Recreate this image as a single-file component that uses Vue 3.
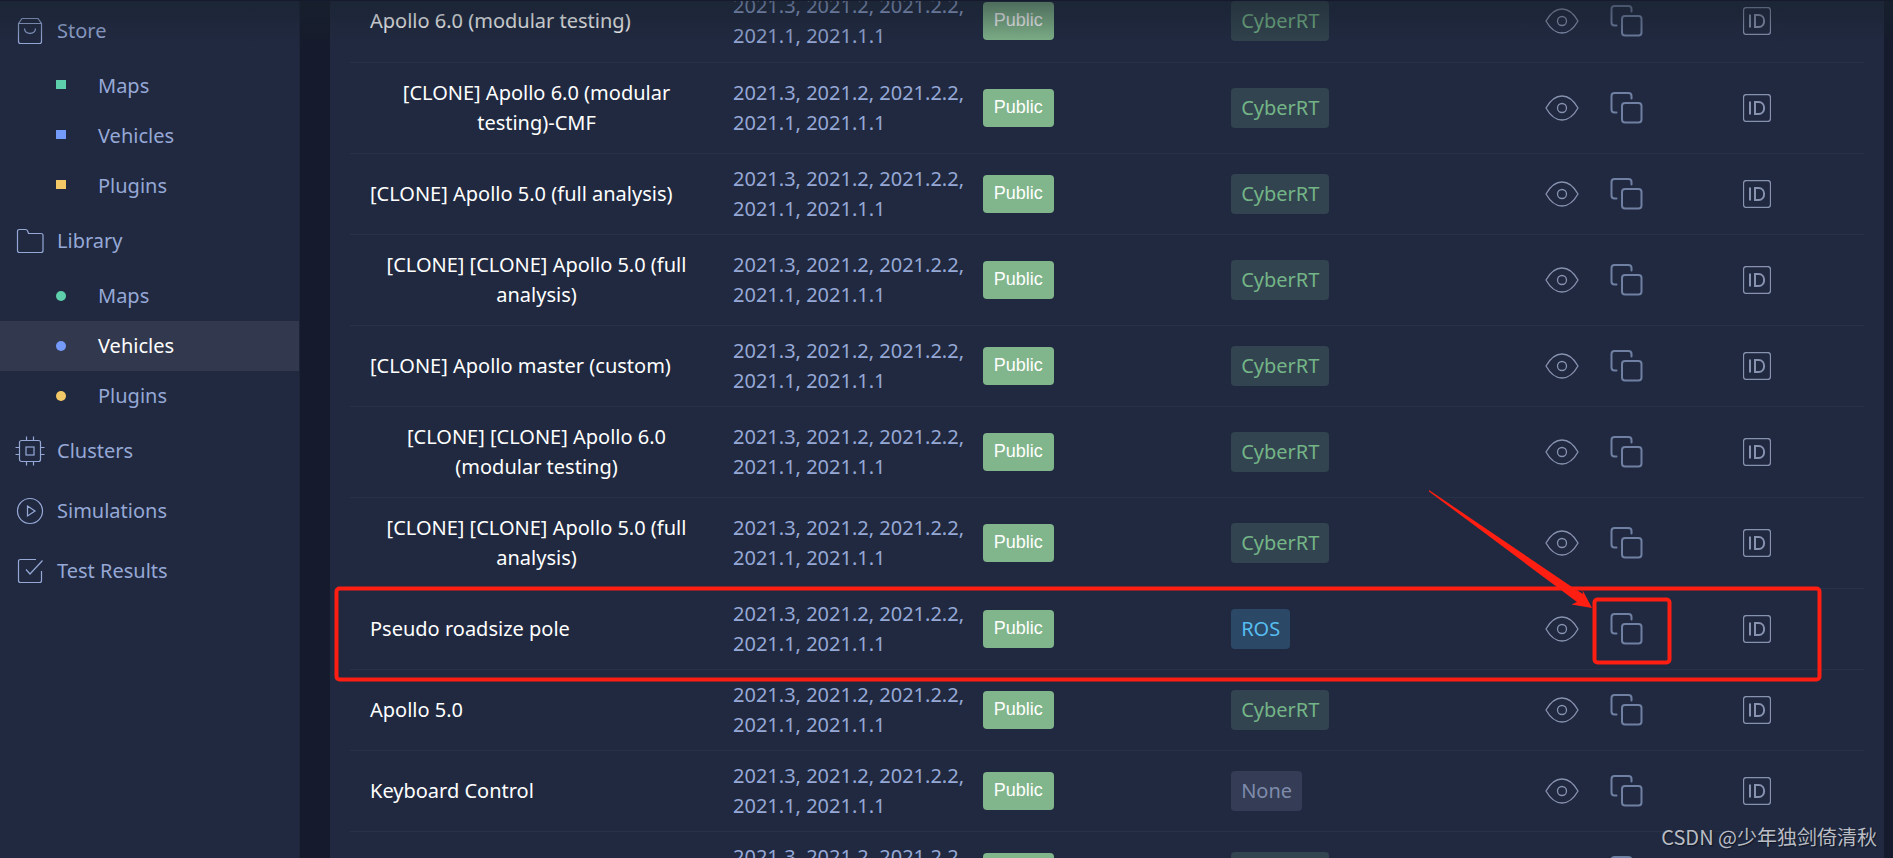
<script setup>
const navigation = [
  {
    label: 'Store', icon: 'store', shape: 'square',
    items: [
      { label: 'Maps', tone: 'green' },
      { label: 'Vehicles', tone: 'blue' },
      { label: 'Plugins', tone: 'yellow' },
    ],
  },
  {
    label: 'Library', icon: 'folder', shape: 'circle',
    items: [
      { label: 'Maps', tone: 'green' },
      { label: 'Vehicles', tone: 'blue', active: true },
      { label: 'Plugins', tone: 'yellow' },
    ],
  },
  { label: 'Clusters', icon: 'chip', items: [] },
  { label: 'Simulations', icon: 'play', items: [] },
  { label: 'Test Results', icon: 'check', items: [] },
]

const versions = '2021.3, 2021.2, 2021.2.2, 2021.1, 2021.1.1'

const vehicles = [
  { name: 'Apollo 6.0 (modular testing)', bridge: 'CyberRT' },
  { name: '[CLONE] Apollo 6.0 (modular testing)-CMF', bridge: 'CyberRT' },
  { name: '[CLONE] Apollo 5.0 (full analysis)', bridge: 'CyberRT' },
  { name: '[CLONE] [CLONE] Apollo 5.0 (full analysis)', bridge: 'CyberRT' },
  { name: '[CLONE] Apollo master (custom)', bridge: 'CyberRT' },
  { name: '[CLONE] [CLONE] Apollo 6.0 (modular testing)', bridge: 'CyberRT' },
  { name: '[CLONE] [CLONE] Apollo 5.0 (full analysis)', bridge: 'CyberRT' },
  { name: 'Pseudo roadsize pole', bridge: 'ROS' },
  { name: 'Apollo 5.0', bridge: 'CyberRT' },
  { name: 'Keyboard Control', bridge: 'None' },
  { name: '', bridge: 'CyberRT' },
]
</script>

<template>
  <div class="page">
    <nav class="sidebar" aria-label="Main">
      <template v-for="group in navigation" :key="group.label">
        <a class="nav-head" href="#">
          <svg class="nav-icon" viewBox="0 0 30 30" aria-hidden="true">
            <template v-if="group.icon === 'store'">
              <path d="M3.5 7.500L7 2.500H23L26.500 7.500V25.500Q26.500 27.500 24.500 27.500H5.500Q3.500 27.500 3.500 25.500ZM3.500 7.500H26.500M9.500 12.500C10 19 20 19 20.500 12.500" />
            </template>
            <template v-else-if="group.icon === 'folder'">
              <path d="M2.500 5.500Q2.500 3.500 4.500 3.500H10.500Q12 3.500 12.600 5L13.500 7.500H26Q28 7.500 28 9.500V24.500Q28 26.500 26 26.500H4.500Q2.500 26.500 2.500 24.500Z" />
            </template>
            <template v-else-if="group.icon === 'chip'">
              <rect x="4.500" y="4.500" width="21" height="21" rx="2" />
              <rect x="11" y="11" width="8" height="8" />
              <path d="M11.500 .5V4.500M18.500 .5V4.500M11.500 25.500V29.500M18.500 25.500V29.500M.5 11.500H4.500M.5 18.500H4.500M25.500 11.500H29.500M25.500 18.500H29.500" />
            </template>
            <template v-else-if="group.icon === 'play'">
              <circle cx="15" cy="15" r="12.500" />
              <path d="M12.500 10L20 15L12.500 20Z" />
            </template>
            <template v-else>
              <path d="M21 3.500H5.500Q3.500 3.500 3.500 5.500V24.500Q3.500 26.500 5.500 26.500H24.500Q26.500 26.500 26.500 24.500V15M11 13.500L15 18L27.500 4.500" />
            </template>
          </svg>
          {{ group.label }}
        </a>
        <a
          v-for="item in group.items"
          :key="item.label"
          class="nav-item"
          :class="{ active: item.active }"
          href="#"
        >
          <svg class="dot" :class="item.tone" viewBox="0 0 10 12" aria-hidden="true">
            <rect v-if="group.shape === 'square'" width="10" height="9" />
            <circle v-else cx="5" cy="6" r="5" />
          </svg>
          {{ item.label }}
        </a>
      </template>
    </nav>

    <main class="panel">
      <table class="vehicles">
        <colgroup>
          <col class="c-name" />
          <col class="c-versions" />
          <col class="c-access" />
          <col class="c-bridge" />
          <col class="c-view" />
          <col class="c-copy" />
          <col class="c-id" />
        </colgroup>
        <tbody>
          <tr v-for="(vehicle, index) in vehicles" :key="index">
            <td class="name-cell"><button class="name" type="button">{{ vehicle.name }}</button></td>
            <td class="versions">{{ versions }}</td>
            <td><button class="access" type="button">Public</button></td>
            <td><span class="bridge" :class="vehicle.bridge.toLowerCase()">{{ vehicle.bridge }}</span></td>
            <td>
              <button class="icon-button" type="button" aria-label="View">
                <svg class="thin" width="34" height="26" viewBox="0 0 34 26">
                  <path d="M1 13C10 -3 24 -3 33 13C24 29 10 29 1 13Z" />
                  <circle cx="17" cy="13" r="4.500" />
                </svg>
              </button>
            </td>
            <td>
              <button class="icon-button" type="button" aria-label="Clone">
                <svg class="copy" width="34" height="34" viewBox="0 0 34 34">
                  <path d="M21.500 7.500V5Q21.500 2 18.500 2H4.500Q1.500 2 1.500 5V18.500Q1.500 21.500 4.500 21.500H6.500" />
                  <rect x="12" y="12" width="19.500" height="19.500" rx="3" />
                </svg>
              </button>
            </td>
            <td>
              <button class="icon-button" type="button" aria-label="Copy ID">
                <svg class="thin" width="28" height="28" viewBox="0 0 28 28">
                  <rect x=".5" y=".5" width="27" height="27" rx="3" />
                  <path class="mark" d="M7 7.500V20.500M12 8H15.500C23 8 23 20 15.500 20H12Z" />
                </svg>
              </button>
            </td>
          </tr>
        </tbody>
      </table>
    </main>

    <div class="top-shade"></div>

    <svg class="annotations" aria-hidden="true">
      <rect x="336.500" y="588.500" width="1483" height="91" rx="3" />
      <rect x="1594.500" y="599.500" width="75" height="63" rx="3" />
      <path d="M1429 490L1572 587L1583 594L1582.500 590L1592 608L1571.500 604.500L1577 602L1557 587L1429 491.500Z" />
    </svg>
    <p class="watermark">CSDN @少年独剑倚清秋</p>
  </div>
</template>

<style>
body {
  margin: 0;
  background: #151b2c;
}
</style>

<style scoped>
.page {
  position: relative;
  display: flex;
  gap: 30px;
  height: 100vh;
  box-sizing: border-box;
  padding: 1px 9px 0 0;
  overflow: hidden;
  background: #151b2c;
  color: #96a8d6;
  font: 20px/30px "Noto Sans", "Open Sans", sans-serif;
}
.sidebar {
  flex: none;
  width: 299px;
  border-right: 1px solid #1c2438;
  background: #202940;
}
.nav-head,
.nav-item {
  display: flex;
  align-items: center;
  color: inherit;
  text-decoration: none;
}
.nav-head {
  height: 60px;
  padding-left: 15px;
  gap: 12px;
}
.nav-item {
  height: 50px;
  padding-left: 56px;
  gap: 32px;
}
.nav-item.active {
  background: #32394e;
  color: #fff;
}
.nav-icon {
  width: 30px;
  height: 30px;
  fill: none;
  stroke: #96a8d6;
  stroke-width: 1.2;
}
.dot {
  width: 10px;
  height: 12px;
}
.green { fill: #5dcfaa; }
.blue { fill: #759bfa; }
.yellow { fill: #f3c867; }

.panel {
  flex: 1;
  min-width: 0;
  padding: 0 20px;
  overflow: hidden;
  background: #202940;
}
.vehicles {
  width: 100%;
  margin-top: -20px;
  table-layout: fixed;
  border-collapse: collapse;
}
.c-name { width: 25.3%; }
.c-versions { width: 16.5%; }
.c-access { width: 16.4%; }
.c-bridge { width: 20.7%; }
.c-view { width: 4.3%; }
.c-copy { width: 8.8%; }
.c-id { width: 8%; }
tr {
  height: 81px;
}
td {
  padding: 0;
  border-bottom: 1px solid #273148;
  vertical-align: middle;
}
.name-cell {
  padding: 15px 30px 15px 20px;
}
.name {
  display: block;
  padding: 0;
  border: 0;
  background: none;
  color: #fff;
  font: inherit;
  text-align: center;
}
.versions {
  padding-right: 10px;
}
.access {
  display: block;
  height: 38px;
  padding: 0 11px 2px;
  border: 0;
  border-radius: 4px;
  background: #81b58b;
  color: #fff;
  font: 18px/20px "Liberation Sans", Arial, sans-serif;
}
.bridge {
  display: inline-block;
  padding: 5px 10px;
  border-radius: 4px;
  vertical-align: middle;
}
.cyberrt { background: #32444f; color: #74b587; }
.ros { background: #2b4866; color: #57bdf0; }
.none { background: #343d55; color: #7f8bab; }
.icon-button {
  display: block;
  padding: 0;
  border: 0;
  background: none;
}
.icon-button svg {
  display: block;
  fill: none;
  stroke: #8792af;
}
.icon-button .copy {
  stroke: #7080a2;
  stroke-width: 2;
  stroke-linecap: round;
}
.icon-button .thin { stroke-width: 1.3; }
.icon-button .mark { stroke-width: 2; }

.top-shade {
  position: absolute;
  inset: 0 0 auto;
  height: 46px;
  border-top: 1px solid #151b2c;
  box-sizing: border-box;
  background: linear-gradient(rgba(25, 34, 44, 0.5), rgba(25, 34, 44, 0));
  pointer-events: none;
}
.annotations {
  position: absolute;
  inset: 0;
  width: 100%;
  height: 100%;
  pointer-events: none;
}
.annotations rect {
  fill: none;
  stroke: #ff1f12;
  stroke-width: 4;
}
.annotations path {
  fill: #ff1f12;
}
.watermark {
  position: absolute;
  right: 16px;
  bottom: 6px;
  margin: 0;
  color: #b9bcc3;
  font: 20px/30px "Noto Sans CJK SC", sans-serif;
  text-shadow: 1px 1px 1px #111827;
}
</style>
